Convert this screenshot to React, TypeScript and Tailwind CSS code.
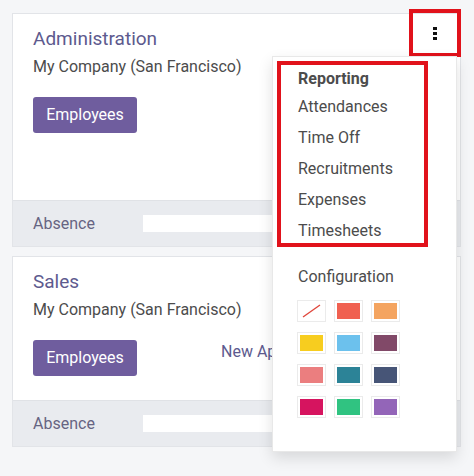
import React from 'react';

const FONT = { fontFamily: 'Roboto, "Noto Sans", Arial, sans-serif' };

const REPORTS = ['Attendances', 'Time Off', 'Recruitments', 'Expenses', 'Timesheets'];

const SWATCHES = [
  '', '#f06050', '#f4a460',
  '#f7cd1f', '#6cc1ed', '#814968',
  '#eb7e7f', '#2c8397', '#475577',
  '#d6145f', '#30c381', '#9365b8',
];

function Swatch({ color }: { color: string }) {
  return (
    <div className="w-[29px] h-[22px] border border-[#ebebeb] p-[2px] bg-white">
      {color ? (
        <div className="w-full h-full" style={{ background: color }} />
      ) : (
        <svg viewBox="0 0 23 16" className="w-full h-full">
          <line x1="3" y1="14" x2="20" y2="2" stroke="#e0473c" strokeWidth="1.4" />
        </svg>
      )}
    </div>
  );
}

function Card({ title, bodyH, extra }: { title: string; bodyH: string; extra?: React.ReactNode }) {
  return (
    <div className="w-[449px] bg-white border border-[#e2e4e8] flex flex-col">
      <div className={`${bodyH} px-[20px] pt-[13px]`}>
        <div className="text-[19px] leading-[24px] text-[#5d5a8e]">{title}</div>
        <div className="text-[16px] leading-[20px] mt-[6px] text-[#4c4c4c]">My Company (San Francisco)</div>
        <div className="flex items-start mt-[20px]">
          <button className="w-[104px] h-[36px] rounded-[3px] bg-[#6f5d9e] text-white text-[16px]">
            Employees
          </button>
          {extra}
        </div>
      </div>
      <div className="h-[46px] bg-[#e9ebef] border-t border-[#e0e2e6] flex items-center px-[20px]">
        <span className="w-[110px] text-[16px] text-[#666482]">Absence</span>
        <div className="flex-1 h-[17px] bg-white" />
      </div>
    </div>
  );
}

export default function App() {
  return (
    <div className="relative w-[474px] h-[476px] bg-[#f5f6f8] overflow-hidden" style={FONT}>
      <div className="flex flex-col gap-[9px] pl-[12px] pt-[13px]">
        <Card title="Administration" bodyH="h-[186px]" />
        <Card
          title="Sales"
          bodyH="h-[143px]"
          extra={<span className="ml-[84px] text-[16px] leading-[24px] text-[#5d5a8e]">New Applications</span>}
        />
      </div>

      {/* dots toggle */}
      <div className="absolute left-[409px] top-[9px] w-[52px] h-[48px] border-[4px] border-[#e1121b] flex items-center justify-center">
        <svg width="4" height="13" viewBox="0 0 4 13">
          <rect x="0" y="0" width="4" height="3" fill="#111" />
          <rect x="0" y="5" width="4" height="3" fill="#111" />
          <rect x="0" y="10" width="4" height="3" fill="#111" />
        </svg>
      </div>

      {/* dropdown */}
      <div className="absolute left-[272px] top-[56px] w-[185px] h-[396px] bg-white border border-[#e8e8e8] shadow-[0_6px_14px_rgba(0,0,0,0.12)] pl-[25px] pt-[10px]">
        <div className="text-[16px] leading-[24px] font-bold text-[#4c4c4c]">Reporting</div>
        {REPORTS.map(r => (
          <div key={r} className="text-[16px] leading-[31px] text-[#4c4c4c]">{r}</div>
        ))}
        <div className="text-[16px] leading-[24px] mt-[19px] text-[#4c4c4c]">Configuration</div>
        <div className="grid grid-cols-[repeat(3,29px)] gap-x-[8px] gap-y-[10px] mt-[11px] -ml-[1px]">
          {SWATCHES.map((c, i) => (
            <Swatch key={i} color={c} />
          ))}
        </div>
      </div>

      {/* highlight */}
      <div className="absolute left-[277px] top-[61px] w-[151px] h-[186px] border-[4px] border-[#e1121b]" />
    </div>
  );
}
